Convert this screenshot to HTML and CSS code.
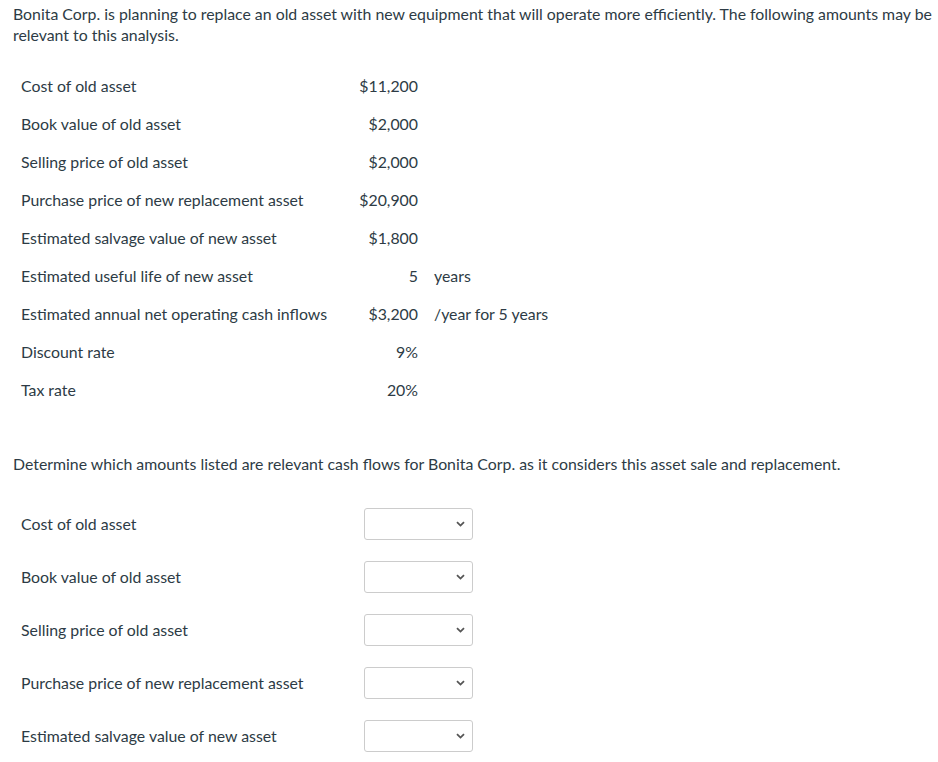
FILE: index.html
```html
<!DOCTYPE html>
<html>
<head>
<meta charset="utf-8">
<link rel="stylesheet" href="styles.css">
</head>
<body>
<div class="page">
  <p class="intro">Bonita Corp. is planning to replace an old asset with new equipment that will operate more efficiently. The following amounts may be relevant to this analysis.</p>
  <div class="facts">
    <div class="label">Cost of old asset</div><div class="value">$11,200</div><div class="unit"></div>
    <div class="label">Book value of old asset</div><div class="value">$2,000</div><div class="unit"></div>
    <div class="label">Selling price of old asset</div><div class="value">$2,000</div><div class="unit"></div>
    <div class="label">Purchase price of new replacement asset</div><div class="value">$20,900</div><div class="unit"></div>
    <div class="label">Estimated salvage value of new asset</div><div class="value">$1,800</div><div class="unit"></div>
    <div class="label">Estimated useful life of new asset</div><div class="value">5</div><div class="unit">years</div>
    <div class="label">Estimated annual net operating cash inflows</div><div class="value">$3,200</div><div class="unit">/year for 5 years</div>
    <div class="label">Discount rate</div><div class="value">9%</div><div class="unit"></div>
    <div class="label">Tax rate</div><div class="value">20%</div><div class="unit"></div>
  </div>
  <p class="question">Determine which amounts listed are relevant cash flows for Bonita Corp. as it considers this asset sale and replacement.</p>
  <div class="answers">
    <div class="arow"><div class="alabel">Cost of old asset</div><div class="select"><svg width="9" height="6" viewBox="0 0 9 6"><polyline points="1,1.2 4.5,4.6 8,1.2" fill="none" stroke="#555" stroke-width="1.8"/></svg></div></div>
    <div class="arow"><div class="alabel">Book value of old asset</div><div class="select"><svg width="9" height="6" viewBox="0 0 9 6"><polyline points="1,1.2 4.5,4.6 8,1.2" fill="none" stroke="#555" stroke-width="1.8"/></svg></div></div>
    <div class="arow"><div class="alabel">Selling price of old asset</div><div class="select"><svg width="9" height="6" viewBox="0 0 9 6"><polyline points="1,1.2 4.5,4.6 8,1.2" fill="none" stroke="#555" stroke-width="1.8"/></svg></div></div>
    <div class="arow"><div class="alabel">Purchase price of new replacement asset</div><div class="select"><svg width="9" height="6" viewBox="0 0 9 6"><polyline points="1,1.2 4.5,4.6 8,1.2" fill="none" stroke="#555" stroke-width="1.8"/></svg></div></div>
    <div class="arow"><div class="alabel">Estimated salvage value of new asset</div><div class="select"><svg width="9" height="6" viewBox="0 0 9 6"><polyline points="1,1.2 4.5,4.6 8,1.2" fill="none" stroke="#555" stroke-width="1.8"/></svg></div></div>
  </div>
</div>
</body>
</html>
```
FILE: styles.css
```css
html, body {
  margin: 0;
  padding: 0;
  background: #fff;
}
body {
  font-family: Lato, "Liberation Sans", sans-serif;
  font-size: 15.85px;
  color: #2d3b45;
}
.page {
  padding: 3px 0 0 13px;
}
p {
  margin: 0;
  line-height: 21px;
}
.facts {
  display: grid;
  grid-template-columns: 317px 80px auto;
  grid-auto-rows: 38px;
  align-items: center;
  padding-left: 8px;
  margin-top: 21px;
}
.value {
  text-align: right;
}
.unit {
  padding-left: 16px;
}
.question {
  margin-top: 45px;
}
.answers {
  margin-top: 23px;
  padding-left: 8px;
}
.arow {
  display: flex;
  align-items: center;
  height: 53px;
}
.alabel {
  width: 343px;
}
.select {
  box-sizing: border-box;
  width: 109px;
  height: 32px;
  border: 1px solid #ccc;
  border-radius: 3px;
  display: flex;
  align-items: center;
  justify-content: flex-end;
  padding-right: 7px;
}
.select svg {
  display: block;
}
```
